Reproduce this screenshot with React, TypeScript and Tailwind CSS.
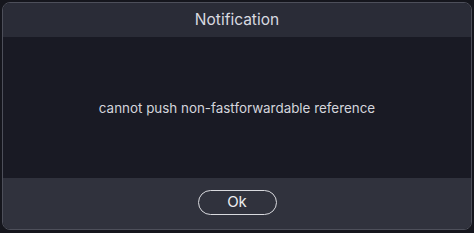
import React from "react";

export default function App() {
  return (
    <div className="w-[474px] h-[233px] bg-[#15161d] pt-[2px] px-[2px] pb-[3px] flex" style={{ fontFamily: "Inter, 'Noto Sans', sans-serif" }}>
      <div className="flex-1 flex flex-col rounded-[8px] border border-[#4d4f5a] overflow-hidden">
        <div className="h-[34px] bg-[#2a2c37] flex items-center justify-center text-[15.5px] text-[#d9dae0]">
          Notification
        </div>
        <div className="h-[141px] bg-[#191a24] flex items-center justify-center text-[13.4px] text-[#d4d5dc] pt-[2px]">
          cannot push non-fastforwardable reference
        </div>
        <div className="flex-1 bg-[#30323d] flex items-center justify-center pb-[3px]">
          <button className="w-[79px] h-[25px] rounded-full border-[1.5px] border-[#d8d9de] text-[15px] text-[#ecedf0] flex items-center justify-center">
            Ok
          </button>
        </div>
      </div>
    </div>
  );
}
